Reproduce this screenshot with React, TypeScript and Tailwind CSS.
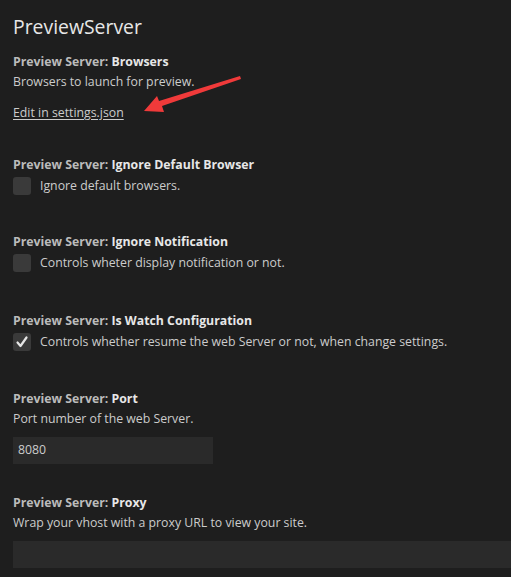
import React from 'react';

const font = { fontFamily: '"Segoe UI", "Open Sans", "Noto Sans", sans-serif' };

function Title({ label }: { label: string }) {
  return (
    <div className="text-[12.3px] leading-[18px] font-bold">
      <span className="text-[#bbbbbb]">Preview Server: </span>
      <span className="text-[#e7e7e7]">{label}</span>
    </div>
  );
}

function CheckRow({ text, checked }: { text: string; checked?: boolean }) {
  return (
    <div className="flex items-center gap-[9px] mt-[3px] h-[18px]">
      <div className="w-[18px] h-[18px] rounded-[3px] bg-[#3a3a3a] flex items-center justify-center">
        {checked && (
          <svg width="14" height="14" viewBox="0 0 14 14">
            <path d="M2.5 7.5 L5.5 11 L11.5 2.5" stroke="#e6e6e6" strokeWidth="2.2" fill="none" strokeLinecap="round" strokeLinejoin="round" />
          </svg>
        )}
      </div>
      <span className="text-[12.3px] leading-[18px] text-[#cccccc]">{text}</span>
    </div>
  );
}

export default function App() {
  return (
    <div className="relative w-[511px] h-[577px] overflow-hidden bg-[#1e1e1e] pl-[13px]" style={font}>
      <div className="pt-[13px] text-[19.4px] leading-[28px] text-[#e7e7e7]">PreviewServer</div>

      <div className="mt-[12px]">
        <Title label="Browsers" />
        <div className="mt-[2px] text-[12.3px] leading-[18px] text-[#cccccc]">Browsers to launch for preview.</div>
        <a className="block mt-[13px] text-[12.3px] leading-[18px] text-[#cccccc] underline underline-offset-2">Edit in settings.json</a>
      </div>

      <div className="mt-[34px]">
        <Title label="Ignore Default Browser" />
        <CheckRow text="Ignore default browsers." />
      </div>

      <div className="mt-[38px]">
        <Title label="Ignore Notification" />
        <CheckRow text="Controls wheter display notification or not." />
      </div>

      <div className="mt-[40px]">
        <Title label="Is Watch Configuration" />
        <CheckRow text="Controls whether resume the web Server or not, when change settings." checked />
      </div>

      <div className="mt-[39px]">
        <Title label="Port" />
        <div className="mt-[2px] text-[12.3px] leading-[18px] text-[#cccccc]">Port number of the web Server.</div>
        <div className="mt-[9px] w-[200px] h-[27px] bg-[#2a2a2a] flex items-center px-[5px] text-[12.3px] text-[#cccccc]">8080</div>
      </div>

      <div className="mt-[30px]">
        <Title label="Proxy" />
        <div className="mt-[2px] text-[12.3px] leading-[18px] text-[#cccccc]">Wrap your vhost with a proxy URL to view your site.</div>
        <div className="mt-[9px] w-[520px] h-[27px] bg-[#2a2a2a]" />
      </div>

      <svg className="absolute left-0 top-0 pointer-events-none" width="511" height="577">
        <path d="M240 76 L241 79 L162 106 L164 112 L144 111 L157 96 L159 101 Z" fill="#f03a3a" />
      </svg>
    </div>
  );
}
